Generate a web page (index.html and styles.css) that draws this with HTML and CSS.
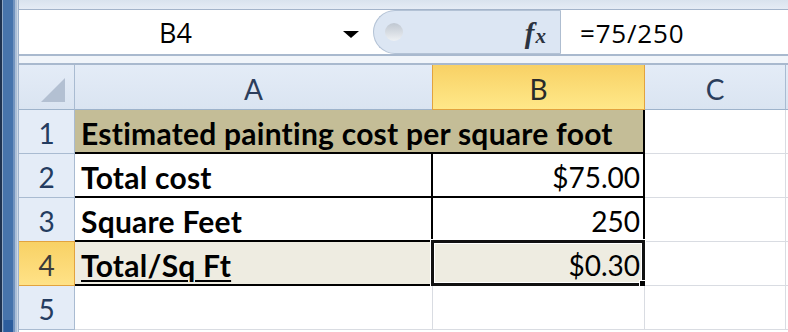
FILE: index.html
```html
<!DOCTYPE html>
<html>
<head>
<meta charset="utf-8">
<link rel="stylesheet" href="styles.css">
</head>
<body>
<div class="app">
  <div class="frame"><div class="frame-bottom"></div></div>
  <div class="main">
    <div class="topband"></div>
    <div class="fbar">
      <div class="namebox"><span class="nb-text">B4</span><span class="nb-arrow"></span></div>
      <div class="fx-area"><span class="knob"></span><span class="fx">f<span class="fx-x">x</span></span></div>
      <div class="formula">=75/250</div>
    </div>
    <div class="strip"></div>
    <div class="sheet">
      <div class="hd corner"><svg width="24" height="24" viewBox="0 0 24 24"><polygon points="0,24 24,0 24,24" fill="#b3c0d2"/></svg></div>
      <div class="hd">A</div>
      <div class="hd hd-sel">B</div>
      <div class="hd">C</div>
      <div class="hd hd-d"></div>

      <div class="rh">1</div>
      <div class="c b tan bb br span2">Estimated painting cost per square foot</div>
      <div class="c"></div>
      <div class="d"></div>

      <div class="rh">2</div>
      <div class="c b bb br">Total cost</div>
      <div class="c num bb br">$75.00</div>
      <div class="c"></div>
      <div class="d"></div>

      <div class="rh">3</div>
      <div class="c b bb br">Square Feet</div>
      <div class="c num bb br">250</div>
      <div class="c"></div>
      <div class="d"></div>

      <div class="rh rh-sel">4</div>
      <div class="c b beige bb br"><span class="u">Total/Sq Ft</span></div>
      <div class="c num beige bb br active">$0.30<span class="selbox"></span><span class="handle"></span></div>
      <div class="c"></div>
      <div class="d"></div>

      <div class="rh">5</div>
      <div class="c"></div>
      <div class="c"></div>
      <div class="c"></div>
      <div class="d"></div>
    </div>
  </div>
</div>
</body>
</html>
```
FILE: styles.css
```css
* { box-sizing: border-box; }
html, body { margin: 0; padding: 0; }
body {
  width: 788px;
  height: 332px;
  overflow: hidden;
  background: #fff;
  font-family: "Lato", "Open Sans", sans-serif;
}
.app { display: flex; width: 788px; height: 332px; }
.frame {
  width: 19px;
  flex: none;
  display: flex;
  flex-direction: column;
  justify-content: flex-end;
  background: linear-gradient(to right,
    #1e3250 0 2px, #8ea7c6 2px 3px, #4774ac 3px 13px,
    #7394bf 13px 15px, #adc0d8 15px 17px, #cfdae8 17px 18px, #9fb2cb 18px 19px);
}
.frame-bottom { height: 12px; width: 9px; margin-left: 4px; background: #2c5d9d; }
.main { flex: 1; display: flex; flex-direction: column; min-width: 0; }

.topband {
  height: 10px;
  background: linear-gradient(#d9e3ee, #e5ecf5);
  border-bottom: 1px solid #a3b4ca;
}
.fbar { height: 44px; display: flex; }
.namebox {
  width: 354px;
  background: #fff;
  display: flex;
  align-items: center;
}
.nb-text {
  margin-left: 140px;
  font-family: "Open Sans", sans-serif;
  font-size: 27px;
  line-height: 44px;
  color: #000;
  padding-top: 1px;
}
.nb-arrow {
  margin-left: auto;
  margin-right: 14px;
  margin-top: 5px;
  width: 0;
  height: 0;
  border-left: 8px solid transparent;
  border-right: 8px solid transparent;
  border-top: 7px solid #000;
}
.fx-area {
  width: 188px;
  background: #dce6f3;
  border: 1px solid #b3c2d5;
  border-right-color: #aebdd0;
  border-radius: 22px 0 0 22px;
  display: flex;
  align-items: center;
}
.knob {
  width: 18px;
  height: 18px;
  border-radius: 50%;
  margin-left: 11px;
  background: linear-gradient(#bfc7d1, #eef1f4);
}
.fx {
  margin-left: auto;
  margin-right: 14px;
  font-family: "Liberation Serif", serif;
  font-style: italic;
  font-weight: 700;
  font-size: 29px;
  color: #2b3340;
  line-height: 1;
  margin-top: 2px;
}
.fx-x { font-size: 21px; margin-left: 1px; }
.formula {
  flex: 1;
  background: #fff;
  font-family: "Open Sans", sans-serif;
  font-size: 26px;
  letter-spacing: 0.8px;
  color: #000;
  padding-left: 19px;
  line-height: 44px;
  padding-top: 1px;
}
.strip {
  height: 11px;
  background: #f1f5fa;
  border-top: 2px solid #a9b9ce;
  border-bottom: 2px solid #a9b9ce;
}

.sheet {
  display: grid;
  grid-template-columns: 56px 358px 212px 141px 2px;
  grid-template-rows: 45px repeat(5, 44px) 2px;
}
.hd, .rh {
  background: linear-gradient(#e4ecf7, #dae4f1);
  border-right: 1px solid #a9bbd1;
  border-bottom: 1px solid #9eb3cb;
  display: flex;
  justify-content: center;
  align-items: flex-end;
  font-size: 28px;
  line-height: 28px;
  padding-bottom: 6px;
  color: #2c3e5c;
}
.rh { background: #e4ecf7; color: #243c60; border-bottom-color: #a9bbd1; }
.corner { justify-content: flex-end; padding-right: 9px; padding-bottom: 7px; }
.corner svg { display: block; }
.hd-sel {
  background: linear-gradient(#f8d165, #ffe889);
  border-right-color: #e2a33f;
  border-bottom-color: #e2a33f;
  box-shadow: -1px 0 0 #e2a33f;
  color: #2a2a2a;
}
.rh-sel {
  background: linear-gradient(#f8d165, #ffe287);
  border-right-color: #e2a33f;
  border-bottom-color: #e2a33f;
  box-shadow: 0 -1px 0 #e2a33f;
  color: #3a3a3a;
}
.hd-d { border-right: none; padding: 0; }

.c {
  background: #fff;
  border-right: 1px solid #d9dce2;
  border-bottom: 1px solid #d9dce2;
  display: flex;
  align-items: flex-end;
  font-size: 28px;
  line-height: 28px;
  padding: 0 6px 6px 6px;
  color: #000;
  white-space: nowrap;
  position: relative;
}
.d { background: #fff; border-bottom: 1px solid #d9dce2; }
.span2 { grid-column: span 2; }
.b { font-weight: 700; font-size: 30px; letter-spacing: 0.25px; }
.num { justify-content: flex-end; padding-right: 3px; }
.bb { border-bottom: 2px solid #000; padding-bottom: 5px; }
.br { border-right: 2px solid #000; }
.tan { background: #c4bd97; }
.beige { background: #eeece1; }
.u {
  text-decoration: underline;
  text-decoration-thickness: 2px;
  text-underline-offset: 3px;
}
.selbox {
  position: absolute;
  left: -2px;
  top: -2px;
  right: -2px;
  bottom: -2px;
  border: 3px solid #111;
  box-shadow: 0 0 0 1px #fff, inset 0 0 0 1px #fff;
  pointer-events: none;
}
.handle {
  position: absolute;
  right: -6px;
  bottom: -6px;
  width: 10px;
  height: 10px;
  background: #000;
  border: 1px solid #fff;
}
```
